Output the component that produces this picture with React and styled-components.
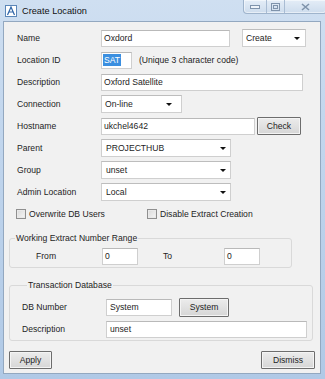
import React from "react";
import styled, { createGlobalStyle } from "styled-components";

const Global = createGlobalStyle`
  html, body { margin: 0; padding: 0; }
  body { font-family: "Liberation Sans", Arial, sans-serif; background: #b9cfe8; }
  * { box-sizing: border-box; }
`;

const Window = styled.div`
  width: 325px;
  height: 379px;
  display: flex;
  flex-direction: column;
  background: linear-gradient(180deg, #cfdff1 0%, #c3d7ee 30%, #b0c9e6 100%);
  overflow: hidden;
`;

const TitleBar = styled.div`
  height: 21px;
  flex: none;
  display: flex;
  align-items: center;
  padding-left: 5px;
  position: relative;
`;

const Title = styled.span`
  font-size: 9.2px;
  color: #111;
  margin-left: 5px;
`;

const Controls = styled.div`
  position: absolute;
  top: 0;
  left: 243px;
  display: flex;
  height: 14px;
  border: 1px solid #9fb4cc;
  border-top: none;
  border-radius: 0 0 4px 4px;
  background: linear-gradient(180deg, #e4edf7, #cddced);
  box-shadow: inset 0 0 0 1px rgba(255,255,255,0.5);
`;

const CtrlBtn = styled.div`
  width: ${(p) => p.$w}px;
  height: 100%;
  display: flex;
  align-items: center;
  justify-content: center;
  border-left: ${(p) => (p.$first ? "none" : "1px solid #a9bcd3")};
`;

const Panel = styled.div`
  flex: 1;
  margin: 0 4px 5px 3px;
  background: #f1f1f1;
  border: 1px solid #93a8c0;
  padding: 7px 4px 0 5px;
  display: flex;
  flex-direction: column;
  color: #1d1d1d;
  font-size: 8.6px;
`;

const Form = styled.div`
  display: flex;
  flex-direction: column;
  gap: 4px;
  padding-left: 8px;
`;

const Row = styled.div`
  display: flex;
  align-items: center;
  height: 18px;
`;

const Label = styled.span`
  width: ${(p) => p.$w || 84}px;
  padding-left: ${(p) => p.$pl || 0}px;
  flex: none;
`;

const Input = styled.div`
  width: ${(p) => p.$w}px;
  height: ${(p) => p.$h || 17}px;
  flex: none;
  background: #fff;
  border: 1px solid #cfcfcf;
  border-top-color: #b9b9b9;
  display: flex;
  align-items: center;
  padding-left: ${(p) => p.$pl ?? 2}px;
  margin-left: ${(p) => p.$ml || 0}px;
  white-space: nowrap;
`;

const Selected = styled.span`
  background: #3b8fe0;
  color: #fff;
  padding: 1px 1px;
`;

const Select = styled.div`
  width: ${(p) => p.$w}px;
  height: 18px;
  flex: none;
  background: #fff;
  border: 1px solid #cfcfcf;
  border-top-color: #bdbdbd;
  display: flex;
  align-items: center;
  padding: 0 4px 0 ${(p) => p.$pl ?? 3}px;
  margin-left: ${(p) => p.$ml || 0}px;
`;

const SelectText = styled.span`
  flex: 1;
`;

const Arrow = styled.span`
  width: 0;
  height: 0;
  border-left: 3px solid transparent;
  border-right: 3px solid transparent;
  border-top: 3.5px solid #111;
  margin-right: ${(p) => p.$mr || 0}px;
`;

const Button = styled.button`
  width: ${(p) => p.$w}px;
  height: ${(p) => p.$h || 18}px;
  flex: none;
  margin-left: ${(p) => p.$ml || 0}px;
  font-family: inherit;
  font-size: 8.6px;
  color: #1d1d1d;
  padding: 0;
  border: 1px solid #6d6d6d;
  border-radius: 1px;
  background: linear-gradient(180deg, #ececec 0%, #e1e1e1 50%, #d6d6d6 100%);
  box-shadow: inset 0 0 0 1px #f4f4f4;
`;

const Hint = styled.span`
  margin-left: 7px;
`;

const CheckRow = styled.div`
  display: flex;
  align-items: center;
  height: 13px;
  margin-top: 6px;
  padding-left: 7px;
`;

const CheckItem = styled.label`
  display: flex;
  align-items: center;
  width: ${(p) => p.$w}px;
  flex: none;
`;

const Box = styled.span`
  width: 10px;
  height: 10px;
  border: 1px solid #8f8f8f;
  background: linear-gradient(135deg, #d9d9d9, #f6f6f6);
  box-shadow: inset 0 0 0 1px #e9e9e9;
  margin-right: 3px;
  flex: none;
`;

const Group = styled.fieldset`
  margin: ${(p) => p.$mt}px 0 0 0;
  width: ${(p) => p.$w}px;
  border: 1px solid #d9d9d9;
  border-radius: 3px;
  padding: ${(p) => p.$pt}px 0 ${(p) => p.$pb}px ${(p) => p.$pl}px;
  display: flex;
  flex-direction: column;
  gap: 4px;
  min-width: 0;
`;

const Legend = styled.legend`
  padding: 0 1px;
  margin-left: 5px;
  font-size: 8.6px;
  line-height: 10px;
`;

const Footer = styled.div`
  display: flex;
  justify-content: space-between;
  margin-top: 10px;
  padding-right: 1px;
`;

function AppIcon() {
  return (
    <svg width="12" height="12" viewBox="0 0 12 12">
      <rect x="0.5" y="0.5" width="11" height="11" fill="#fff" stroke="#5b86b8" />
      <path d="M2.5 10 L6 2 L9.5 10 M4 7 H8" stroke="#2f65a8" strokeWidth="1.2" fill="none" />
    </svg>
  );
}

export default function App() {
  return (
    <>
      <Global />
      <Window>
        <TitleBar>
          <AppIcon />
          <Title>Create Location</Title>
          <Controls>
            <CtrlBtn $w={22} $first>
              <svg width="10" height="4" viewBox="0 0 10 4">
                <rect x="0.5" y="0.5" width="9" height="3" fill="#eef3f9" stroke="#7f93ab" />
              </svg>
            </CtrlBtn>
            <CtrlBtn $w={18}>
              <svg width="9" height="8" viewBox="0 0 9 8">
                <rect x="0.5" y="0.5" width="8" height="7" fill="none" stroke="#7f93ab" />
                <rect x="2.5" y="2.5" width="4" height="3" fill="none" stroke="#7f93ab" />
              </svg>
            </CtrlBtn>
            <CtrlBtn $w={42}>
              <svg width="9" height="8" viewBox="0 0 9 8">
                <path d="M1 1 L8 7 M8 1 L1 7" stroke="#7f93ab" strokeWidth="1.6" />
              </svg>
            </CtrlBtn>
          </Controls>
        </TitleBar>
        <Panel>
          <Form>
            <Row>
              <Label>Name</Label>
              <Input $w={129}>Oxdord</Input>
              <Select $w={64} $ml={12}>
                <SelectText>Create</SelectText>
                <Arrow $mr={1} />
              </Select>
            </Row>
            <Row>
              <Label>Location ID</Label>
              <Input $w={31} $pl={1}>
                <Selected>SAT</Selected>
              </Input>
              <Hint>(Unique 3 character code)</Hint>
            </Row>
            <Row>
              <Label>Description</Label>
              <Input $w={202}>Oxford Satellite</Input>
            </Row>
            <Row>
              <Label>Connection</Label>
              <Select $w={81}>
                <SelectText>On-line</SelectText>
                <Arrow $mr={5} />
              </Select>
            </Row>
            <Row>
              <Label>Hostname</Label>
              <Input $w={154}>ukchel4642</Input>
              <Button $w={44} $ml={2}>Check</Button>
            </Row>
            <Row>
              <Label>Parent</Label>
              <Select $w={130} $pl={4}>
                <SelectText>PROJECTHUB</SelectText>
                <Arrow />
              </Select>
            </Row>
            <Row>
              <Label>Group</Label>
              <Select $w={130} $pl={4}>
                <SelectText>unset</SelectText>
                <Arrow />
              </Select>
            </Row>
            <Row>
              <Label>Admin Location</Label>
              <Select $w={130} $pl={4}>
                <SelectText>Local</SelectText>
                <Arrow />
              </Select>
            </Row>
          </Form>
          <CheckRow>
            <CheckItem $w={131}>
              <Box />
              Overwrite DB Users
            </CheckItem>
            <CheckItem>
              <Box />
              Disable Extract Creation
            </CheckItem>
          </CheckRow>
          <Group $w={283} $mt={13} $pt={4} $pb={2} $pl={0}>
            <Legend>Working Extract Number Range</Legend>
            <Row>
              <Label $w={92} $pl={26}>From</Label>
              <Input $w={36}>0</Input>
              <Label $w={86} $pl={25}>To</Label>
              <Input $w={36}>0</Input>
            </Row>
          </Group>
          <Group $w={304} $mt={12} $pt={8} $pb={2} $pl={12}>
            <Legend>Transaction Database</Legend>
            <Row>
              <Label $w={84}>DB Number</Label>
              <Input $w={66} $pl={3}>System</Input>
              <Button $w={50} $h={19} $ml={7}>System</Button>
            </Row>
            <Row>
              <Label $w={84}>Description</Label>
              <Input $w={201} $pl={3}>unset</Input>
            </Row>
          </Group>
          <Footer>
            <Button $w={43}>Apply</Button>
            <Button $w={54}>Dismiss</Button>
          </Footer>
        </Panel>
      </Window>
    </>
  );
}
